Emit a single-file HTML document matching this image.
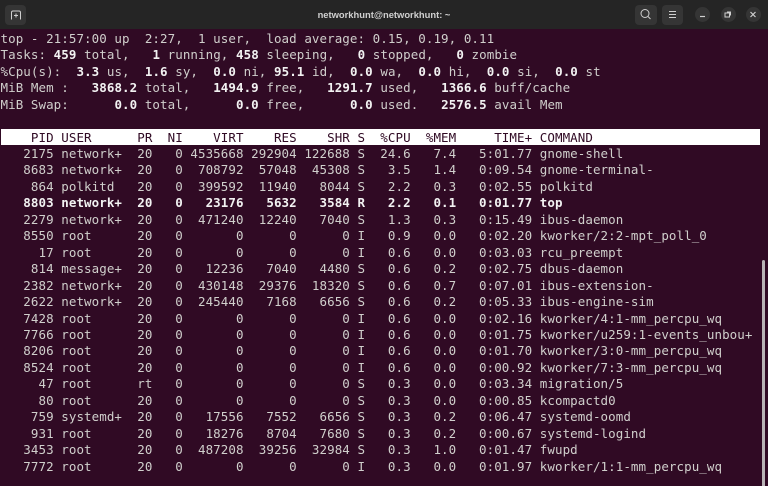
<!DOCTYPE html>
<html>
<head>
<meta charset="utf-8">
<style>
html,body{margin:0;padding:0;background:#300a24;}
body{width:768px;height:486px;overflow:hidden;position:relative;}
#bar{position:absolute;left:0;top:0;width:768px;height:29px;background:#252525;}
.btn{position:absolute;top:5px;width:21px;height:20px;background:#353535;border-radius:4px;}
.c{position:absolute;top:7px;width:15px;height:15px;background:#353535;border-radius:50%;}
#title{position:absolute;left:284px;width:200px;top:8px;text-align:center;font:bold 9.4px/13px "Liberation Sans",sans-serif;color:#d0d0d0;white-space:pre;filter:blur(.25px);}
svg{position:absolute;left:0;top:0;filter:blur(.3px);}
#hdr{position:absolute;left:1px;top:129px;width:759px;height:16px;background:#fff;}
pre{position:absolute;left:0.5px;top:30.8px;margin:0;font-family:"DejaVu Sans Mono","Liberation Mono",monospace;font-size:12.5px;letter-spacing:.07px;line-height:16.45px;color:#d0cfcc;filter:blur(.25px);}
pre b{color:#f2f2f2;font-weight:bold;}
pre i{font-style:normal;color:#300a24;}
#sb{position:absolute;left:762px;top:260px;width:3px;height:226px;background:#b9b3b6;border-radius:2px 2px 0 0;}
</style>
</head>
<body>
<div id="bar"></div>
<div class="btn" style="left:5px"></div>
<div class="btn" style="left:635px;width:22px"></div>
<div class="btn" style="left:662px"></div>
<div class="c" style="left:695px"></div>
<div class="c" style="left:721px"></div>
<div class="c" style="left:746px"></div>
<div id="title">networkhunt@networkhunt: ~</div>
<svg width="768" height="29" viewBox="0 0 768 29" fill="none" stroke="#cfcfcf" stroke-width="1">
<path d="M11.5 19.500V12.500a1.500 1.500 0 0 1 1.500-1.500h6a1.500 1.500 0 0 1 1.500 1.500v7" />
<path d="M16 13.500v4M14 15.500h4" />
<circle cx="645" cy="13.500" r="4" />
<path d="M648 16.500l2.500 2.500" />
<path d="M669 11.500h7M669 14.500h7M669 17.500h7" />
<path d="M700 16.500h5" stroke-width="1.200" />
<rect x="725" y="13" width="4.500" height="4" />
<path d="M727 12h3.500v3.500" />
<path d="M750.500 12l5 5M755.500 12l-5 5" stroke-width="1.200" />
</svg>
<div id="hdr"></div>
<pre>top - 21:57:00 up  2:27,  1 user,  load average: 0.15, 0.19, 0.11
Tasks: <b>459</b> total,   <b>1</b> running, <b>458</b> sleeping,   <b>0</b> stopped,   <b>0</b> zombie
%Cpu(s):  <b>3.3</b> us,  <b>1.6</b> sy,  <b>0.0</b> ni, <b>95.1</b> id,  <b>0.0</b> wa,  <b>0.0</b> hi,  <b>0.0</b> si,  <b>0.0</b> st
MiB Mem :   <b>3868.2</b> total,   <b>1494.9</b> free,   <b>1291.7</b> used,   <b>1366.6</b> buff/cache
MiB Swap:      <b>0.0</b> total,      <b>0.0</b> free,      <b>0.0</b> used.   <b>2576.5</b> avail Mem

<i>    PID USER      PR  NI    VIRT    RES    SHR S  %CPU  %MEM     TIME+ COMMAND</i>
   2175 network+  20   0 4535668 292904 122688 S  24.6   7.4   5:01.77 gnome-shell
   8683 network+  20   0  708792  57048  45308 S   3.5   1.4   0:09.54 gnome-terminal-
    864 polkitd   20   0  399592  11940   8044 S   2.2   0.3   0:02.55 polkitd
<b>   8803 network+  20   0   23176   5632   3584 R   2.2   0.1   0:01.77 top</b>
   2279 network+  20   0  471240  12240   7040 S   1.3   0.3   0:15.49 ibus-daemon
   8550 root      20   0       0      0      0 I   0.9   0.0   0:02.20 kworker/2:2-mpt_poll_0
     17 root      20   0       0      0      0 I   0.6   0.0   0:03.03 rcu_preempt
    814 message+  20   0   12236   7040   4480 S   0.6   0.2   0:02.75 dbus-daemon
   2382 network+  20   0  430148  29376  18320 S   0.6   0.7   0:07.01 ibus-extension-
   2622 network+  20   0  245440   7168   6656 S   0.6   0.2   0:05.33 ibus-engine-sim
   7428 root      20   0       0      0      0 I   0.6   0.0   0:02.16 kworker/4:1-mm_percpu_wq
   7766 root      20   0       0      0      0 I   0.6   0.0   0:01.75 kworker/u259:1-events_unbou+
   8206 root      20   0       0      0      0 I   0.6   0.0   0:01.70 kworker/3:0-mm_percpu_wq
   8524 root      20   0       0      0      0 I   0.6   0.0   0:00.92 kworker/7:3-mm_percpu_wq
     47 root      rt   0       0      0      0 S   0.3   0.0   0:03.34 migration/5
     80 root      20   0       0      0      0 S   0.3   0.0   0:00.85 kcompactd0
    759 systemd+  20   0   17556   7552   6656 S   0.3   0.2   0:06.47 systemd-oomd
    931 root      20   0   18276   8704   7680 S   0.3   0.2   0:00.67 systemd-logind
   3453 root      20   0  487208  39256  32984 S   0.3   1.0   0:01.47 fwupd
   7772 root      20   0       0      0      0 I   0.3   0.0   0:01.97 kworker/1:1-mm_percpu_wq</pre>
<div id="sb"></div>
</body>
</html>
